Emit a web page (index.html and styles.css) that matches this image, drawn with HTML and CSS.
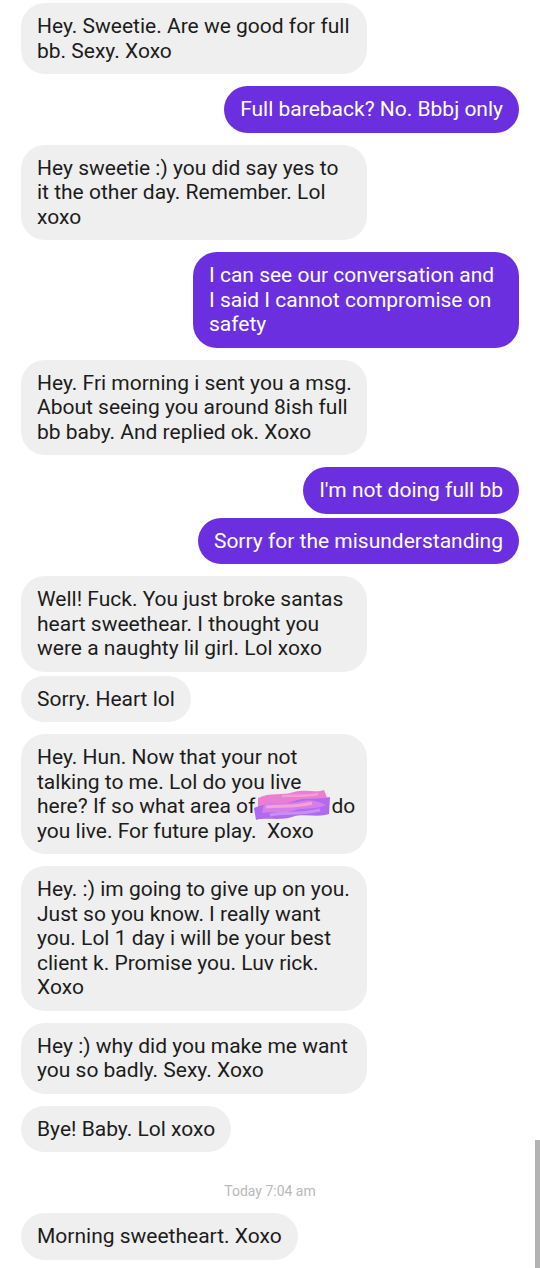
FILE: index.html
```html
<!DOCTYPE html>
<html lang="en">
<head>
    <meta charset="UTF-8">
    <meta name="viewport" content="width=device-width, initial-scale=1.0">
    <title>Messages</title>
    <link rel="stylesheet" href="styles.css">
</head>
<body>
    <div class="thread">
        <div class="msg in multi first">Hey. Sweetie. Are we good for full<br>bb. Sexy. Xoxo</div>
        <div class="msg out">Full bareback? No. Bbbj only</div>
        <div class="msg in multi">Hey sweetie :) you did say yes to<br>it the other day. Remember. Lol<br>xoxo</div>
        <div class="msg out multi">I can see our conversation and<br>I said I cannot compromise on<br>safety</div>
        <div class="msg in multi">Hey. Fri morning i sent you a msg.<br>About seeing you around 8ish full<br>bb baby. And replied ok. Xoxo</div>
        <div class="msg out">I'm not doing full bb</div>
        <div class="msg out same">Sorry for the misunderstanding</div>
        <div class="msg in multi">Well! Fuck. You just broke santas<br>heart sweethear. I thought you<br>were a naughty lil girl. Lol xoxo</div>
        <div class="msg in same">Sorry. Heart lol</div>
        <div class="msg in multi">Hey. Hun. Now that your not<br>talking to me. Lol do you live<br>here? If so what area of<span class="scribble"><svg width="80" height="42" viewBox="0 0 80 42">
            <path d="M6 14 C18 8 30 12 42 8 C54 5 64 9 72 6 L76 16 C64 20 52 16 40 21 C28 25 16 22 6 26 Z" fill="#ea7fd2"/>
            <path d="M2 24 C14 18 28 22 42 17 C54 13 66 16 78 13 L77 30 C66 34 52 29 40 33 C28 37 14 33 4 36 Z" fill="#b06af2"/>
            <path d="M12 20 C24 17 36 21 50 17 C60 15 68 18 74 21 C64 26 52 23 40 27 C28 30 18 27 10 29 Z" fill="#d67ee6"/>
            <path d="M14 23 C28 21 42 24 60 19" stroke="#f4a0da" stroke-width="3" fill="none"/>
            <path d="M18 31 C34 28 48 31 68 26" stroke="#c88ef5" stroke-width="3" fill="none"/>
            <path d="M30 12 C42 11 54 13 66 10" stroke="#f59bd6" stroke-width="2.5" fill="none"/>
        </svg></span>do<br>you live. For future play.&nbsp; Xoxo</div>
        <div class="msg in multi">Hey. :) im going to give up on you.<br>Just so you know. I really want<br>you. Lol 1 day i will be your best<br>client k. Promise you. Luv rick.<br>Xoxo</div>
        <div class="msg in multi">Hey :) why did you make me want<br>you so badly. Sexy. Xoxo</div>
        <div class="msg in">Bye! Baby. Lol xoxo</div>
        <div class="stamp">Today 7:04 am</div>
        <div class="msg in after-stamp">Morning sweetheart. Xoxo</div>
    </div>
    <div class="scrollbar"></div>
</body>
</html>
```
FILE: styles.css
```css
body {
    margin: 0;
    background-color: #ffffff;
    font-family: 'Roboto', 'Noto Sans', sans-serif;
    overflow: hidden;
}

.thread {
    display: flex;
    flex-direction: column;
    padding: 3px 21px 0 21px;
}

.msg {
    font-size: 21px;
    line-height: 24.5px;
    padding: 11px 16px;
    border-radius: 24px;
    margin-top: 12px;
    box-sizing: border-box;
    white-space: nowrap;
}

.msg.first {
    margin-top: 0;
}

.msg.same {
    margin-top: 4px;
}

.in {
    align-self: flex-start;
    background-color: #efefef; /* light grey bubble */
    color: #1c1c1c;
}

.in.multi {
    width: 346px;
}

.out {
    align-self: flex-end;
    background-color: #6b2fe0; /* purple bubble */
    color: #ffffff;
}

.out.multi {
    width: 326px;
}

.scribble {
    display: inline-block;
    width: 76px;
    height: 24px;
    vertical-align: top;
    position: relative;
}

.scribble svg {
    position: absolute;
    left: -3px;
    top: -10px;
}

.stamp {
    align-self: center;
    font-size: 14px;
    line-height: 17px;
    color: #b9b9b9;
    margin-top: 31px;
}

.msg.after-stamp {
    margin-top: 13px;
}

.scrollbar {
    position: fixed;
    right: 0;
    top: 1140px;
    width: 5px;
    height: 128px;
    background-color: #b3b3b3;
}
```
